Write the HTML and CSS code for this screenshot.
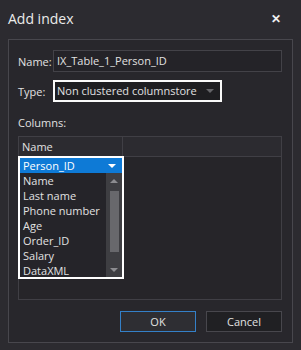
FILE: index.html
```html
<!DOCTYPE html>
<html lang="en">
    <head>
        <meta charset="UTF-8">
        <link rel="stylesheet" href="styles.css">
        <title>Add index</title>
    </head>
    <body>
        <div class="dialog">
            <!-- title bar -->
            <div class="titleBar">
                <span class="title">Add index</span>
                <span class="close">&#x2715;</span>
            </div>

            <div class="panel">
                <div class="row">
                    <span class="label">Name:</span>
                    <div class="textBox">IX_Table_1_Person_ID</div>
                </div>
                <div class="row">
                    <span class="label">Type:</span>
                    <div class="select">
                        <span>Non clustered columnstore</span>
                        <span class="arrow"></span>
                    </div>
                </div>

                <div class="columnsLabel">Columns:</div>

                <!-- grid with open combo -->
                <div class="grid">
                    <div class="gridHeader">
                        <div class="headCell">Name</div>
                        <div class="headRest"></div>
                    </div>

                    <div class="combo">
                        <div class="comboValue">
                            <span>Person_ID</span>
                            <span class="arrow white"></span>
                        </div>
                        <div class="comboList">
                            <ul class="items">
                                <li>Name</li>
                                <li>Last name</li>
                                <li>Phone number</li>
                                <li>Age</li>
                                <li>Order_ID</li>
                                <li>Salary</li>
                                <li>DataXML</li>
                            </ul>
                            <div class="scrollBar">
                                <span class="scrollUp"></span>
                                <span class="thumb"></span>
                                <span class="scrollDown"></span>
                            </div>
                        </div>
                    </div>
                </div>

                <div class="buttons">
                    <div class="button ok">OK</div>
                    <div class="button">Cancel</div>
                </div>
            </div>
        </div>
    </body>
</html>
```

FILE: styles.css
```css
body{
    margin: 0;
    font-family: "Open Sans", "Noto Sans", sans-serif;
    font-size: 11px;
    color: rgb(225, 225, 225);
    background-color: rgb(44, 43, 48);
}

.dialog{
    width: 301px;
    height: 350px;
    box-sizing: border-box;
    background-color: rgb(44, 43, 48);
    display: flex;
    flex-direction: column;
}

/*************************************************************************************************/

/* title bar */
.titleBar{
    height: 39px;
    display: flex;
    align-items: center;
    justify-content: space-between;
    padding: 0 20px 2px 8px;
    box-sizing: border-box;
}

.title{
    font-size: 14px;
    color: rgb(235, 235, 235);
}

.close{
    font-size: 12px;
    font-weight: 700;
    color: rgb(240, 240, 240);
}

/*************************************************************************************************/

/* main panel */
.panel{
    margin: 0 8px;
    height: 304px;
    box-sizing: border-box;
    border: 1px solid rgb(72, 71, 77);
    background-color: rgb(40, 39, 44);
    padding: 10px 10px 0 9px;
    display: flex;
    flex-direction: column;
}

.row{
    display: flex;
    align-items: center;
    height: 22px;
    margin-bottom: 8px;
}

.label{
    width: 35px;
    flex-shrink: 0;
}

.textBox{
    flex: 1;
    height: 22px;
    box-sizing: border-box;
    border: 1px solid rgb(67, 66, 72);
    background-color: rgb(36, 35, 40);
    padding: 0 3px;
    line-height: 20px;
    white-space: nowrap;
}

.select{
    width: 169px;
    height: 22px;
    box-sizing: border-box;
    border: 2px solid rgb(250, 250, 250);
    background-color: rgb(30, 30, 33);
    padding: 0 6px 0 2px;
    line-height: 18px;
    white-space: nowrap;
    display: flex;
    align-items: center;
    justify-content: space-between;
}

.arrow{
    width: 0;
    height: 0;
    border-left: 4px solid transparent;
    border-right: 4px solid transparent;
    border-top: 4px solid rgb(100, 100, 104);
}

.arrow.white{
    border-top-color: rgb(255, 255, 255);
}

.columnsLabel{
    margin-top: 6px;
    height: 20px;
    line-height: 14px;
}

/*************************************************************************************************/

/* grid */
.grid{
    position: relative;
    height: 164px;
    box-sizing: border-box;
    border: 1px solid rgb(64, 63, 69);
    background-color: rgb(38, 37, 41);
}

.gridHeader{
    display: flex;
    height: 19px;
    border-bottom: 1px solid rgb(64, 63, 69);
    background-color: rgb(44, 43, 48);
}

.headCell{
    width: 100px;
    padding-left: 3px;
    line-height: 19px;
    border-right: 1px solid rgb(64, 63, 69);
}

.headRest{
    flex: 1;
}

/* open combo box */
.combo{
    position: absolute;
    left: -1px;
    top: 19px;
    width: 106px;
    border: 2px solid rgb(255, 255, 255);
    box-sizing: border-box;
    background-color: rgb(37, 36, 41);
}

.comboValue{
    height: 15px;
    background-color: rgb(14, 122, 214);
    color: white;
    padding: 0 6px 0 3px;
    line-height: 15px;
    display: flex;
    align-items: center;
    justify-content: space-between;
}

.comboList{
    display: flex;
    height: 104px;
}

.items{
    list-style: none;
    margin: 0;
    padding: 0 0 0 3px;
    flex: 1;
}

.items li{
    height: 15px;
    line-height: 15px;
    white-space: nowrap;
}

.scrollBar{
    width: 16px;
    background-color: rgb(62, 62, 66);
    position: relative;
}

.scrollUp, .scrollDown{
    position: absolute;
    left: 4px;
    width: 0;
    height: 0;
    border-left: 4px solid transparent;
    border-right: 4px solid transparent;
}

.scrollUp{
    top: 6px;
    border-bottom: 4px solid rgb(140, 140, 144);
}

.scrollDown{
    bottom: 5px;
    border-top: 4px solid rgb(140, 140, 144);
}

.thumb{
    position: absolute;
    left: 4px;
    top: 18px;
    width: 9px;
    height: 61px;
    background-color: rgb(104, 104, 108);
}

/*************************************************************************************************/

/* buttons */
.buttons{
    display: flex;
    justify-content: flex-end;
    gap: 10px;
    margin-top: 11px;
}

.button{
    width: 76px;
    height: 21px;
    box-sizing: border-box;
    border: 1px solid rgb(72, 71, 77);
    background-color: rgb(32, 32, 35);
    text-align: center;
    line-height: 19px;
}

.button.ok{
    border-color: rgb(52, 128, 200);
    background-color: rgb(46, 46, 51);
}
```
